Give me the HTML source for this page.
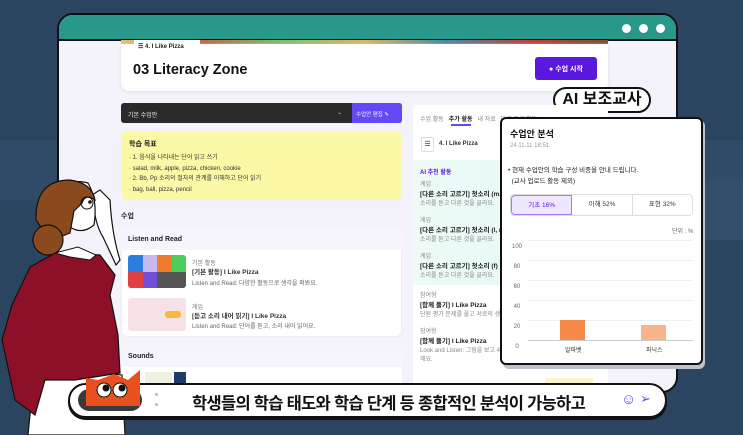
<!DOCTYPE html>
<html><head><meta charset="utf-8">
<style>
*{margin:0;padding:0;box-sizing:border-box}
body{width:743px;height:435px;overflow:hidden;background:#2b4561;font-family:"Liberation Sans","Noto Sans CJK KR",sans-serif;position:relative;color:#222}
.a{position:absolute}
.t{font-size:6px;color:#333;white-space:nowrap}
</style></head><body>
<div class="a" style="left:0;top:140px;width:743px;height:60px;background:#2f4b68"></div>
<div class="a" style="left:680px;top:180px;width:63px;height:60px;background:#344f6b"></div>
<!-- window -->
<div class="a" style="left:57px;top:13px;width:621px;height:380px;background:#f4f3fb;border:2px solid #111;border-radius:16px;overflow:hidden">
  <div class="a" style="left:0;top:0;width:100%;height:26px;background:#27988a;border-bottom:2px solid #111"></div>
  <div class="a" style="left:563px;top:9px;width:9px;height:9px;border-radius:50%;background:#fff"></div>
  <div class="a" style="left:580px;top:9px;width:9px;height:9px;border-radius:50%;background:#fff"></div>
  <div class="a" style="left:597px;top:9px;width:9px;height:9px;border-radius:50%;background:#fff"></div>
</div>
<!-- top card -->
<div class="a" style="left:121px;top:40px;width:487px;height:6px;background:linear-gradient(90deg,#e8c070,#d06040,#7cc070,#e8b060,#4a8aa0,#c04040,#8a4a30)"></div>
<div class="a" style="left:121px;top:44px;width:487px;height:47px;background:#fff;border-radius:0 0 8px 8px;box-shadow:0 1px 3px #ddd"></div>
<div class="a" style="left:134px;top:40px;width:66px;height:12px;background:#fff;border-radius:0 0 8px 8px;font-size:6px;font-weight:bold;padding:3px 4px">☰ 4. I Like Pizza</div>
<div class="a" style="left:133px;top:62px;font-size:14.5px;font-weight:bold;color:#111">03 Literacy Zone</div>
<div class="a" style="left:535px;top:57px;width:62px;height:23px;background:#5b19e0;border-radius:3px;color:#fff;font-size:7px;font-weight:bold;padding-top:7px;text-align:center">● 수업 시작</div>
<!-- AI pill -->
<div class="a" style="left:553px;top:87px;width:98px;height:26px;background:#fff;border:2px solid #111;border-radius:13px;font-size:16px;font-weight:bold;text-align:center;line-height:22px;color:#111">AI 보조교사</div>
<!-- left column -->
<div class="a" style="left:121px;top:103px;width:281px;height:20px;background:#2a2a2a;border-radius:3px"></div>
<div class="a" style="left:352px;top:103px;width:50px;height:20px;background:#6547f5;border-radius:0 3px 3px 0;color:#fff;font-size:5.5px;padding:7px 4px">수업안 편집 ✎</div>
<div class="a t" style="left:128px;top:110px;color:#eee">기본 수업안</div>
<div class="a t" style="left:337px;top:109px;color:#ccc">⌄</div>
<div class="a" style="left:121px;top:131px;width:281px;height:69px;background:#fbf8a6;border-radius:6px"></div>
<div class="a" style="left:129px;top:139px;font-size:7px;font-weight:bold">학습 목표</div>
<div class="a t" style="left:129px;top:153px;line-height:10.5px">· 1. 음식을 나타내는 단어 읽고 쓰기<br>· salad, milk, apple, pizza, chicken, cookie<br>· 2. Bb, Pp 소리의 철자의 관계를 이해하고 단어 읽기<br>· bag, ball, pizza, pencil</div>
<div class="a" style="left:121px;top:211px;font-size:7px;font-weight:bold">수업</div>
<div class="a" style="left:121px;top:228px;width:281px;height:109px;background:#fff;border-radius:6px;border:1px solid #eee"></div>
<div class="a" style="left:121px;top:228px;width:281px;height:22px;background:#f6f4fd;border-radius:6px 6px 0 0;font-size:7px;font-weight:bold;padding:8px 7px">Listen and Read</div>
<div class="a" style="left:128px;top:255px;width:58px;height:33px;display:grid;grid-template-columns:1fr 1fr 1fr 1fr;border-radius:3px;overflow:hidden">
<div style="background:#2b7de0"></div><div style="background:#c8b8f0"></div><div style="background:#f07a30"></div><div style="background:#4ccf5a"></div>
<div style="background:#e04040"></div><div style="background:#7050d8"></div><div style="background:#555;grid-column:span 2"></div></div>
<div class="a t" style="left:192px;top:258px;color:#777">기본 활동</div>
<div class="a t" style="left:192px;top:266px;font-weight:bold;font-size:6.5px">[기본 활동] I Like Pizza</div>
<div class="a t" style="left:192px;top:278px;color:#666">Listen and Read: 다양한 활동으로 생각을 펴봐요.</div>
<div class="a" style="left:128px;top:298px;width:58px;height:33px;background:#f6e2e4;border-radius:3px"></div>
<div class="a" style="left:165px;top:311px;width:16px;height:7px;background:#f4b940;border-radius:3px"></div>
<div class="a t" style="left:192px;top:302px;color:#777">게임</div>
<div class="a t" style="left:192px;top:310px;font-weight:bold;font-size:6.5px">[듣고 소리 내어 읽기] I Like Pizza</div>
<div class="a t" style="left:192px;top:321px;color:#666">Listen and Read: 단어를 듣고, 소리 내어 읽어요.</div>
<div class="a" style="left:121px;top:345px;width:281px;height:45px;background:#fff;border-radius:6px"></div>
<div class="a" style="left:121px;top:345px;width:281px;height:22px;background:#f6f4fd;border-radius:6px 6px 0 0;font-size:7px;font-weight:bold;padding:8px 7px">Sounds</div>
<div class="a" style="left:145px;top:372px;width:27px;height:14px;background:#eef0e0"></div>
<div class="a" style="left:174px;top:372px;width:12px;height:14px;background:#1f3a66"></div>
<!-- right panel -->
<div class="a" style="left:413px;top:105px;width:195px;height:285px;background:#fff;border-radius:6px"></div>
<div class="a t" style="left:420px;top:114px;color:#888">수업 활동 &nbsp; <b style="color:#222">추가 활동</b> &nbsp; 내 자료 &nbsp; 다른 자료 활동</div>
<div class="a" style="left:451px;top:124px;width:20px;height:1.5px;background:#6547f5"></div>
<div class="a" style="left:421px;top:137px;width:13px;height:15px;border:1px solid #ddd;border-radius:2px;font-size:7px;text-align:center;line-height:13px">☰</div>
<div class="a t" style="left:439px;top:141px;font-weight:bold">4. I Like Pizza</div>
<div class="a" style="left:413px;top:160px;width:195px;height:125px;background:linear-gradient(90deg,#eefaf6,#e0f8f8)"></div>
<div class="a t" style="left:420px;top:167px;color:#5b19e0;font-weight:bold">AI 추천 활동</div>
<div class="a t" style="left:420px;top:181px;line-height:9px;color:#888">게임<br><b style="color:#222;font-size:6.5px">[다른 소리 고르기] 첫소리 (m, n)</b><br>소리를 듣고 다른 것을 골라요.</div>
<div class="a t" style="left:420px;top:217px;line-height:9px;color:#888">게임<br><b style="color:#222;font-size:6.5px">[다른 소리 고르기] 첫소리 (l, n)</b><br>소리를 듣고 다른 것을 골라요.</div>
<div class="a t" style="left:420px;top:253px;line-height:9px;color:#888">게임<br><b style="color:#222;font-size:6.5px">[다른 소리 고르기] 첫소리 (f)</b><br>소리를 듣고 다른 것을 골라요.</div>
<div class="a t" style="left:420px;top:292px;line-height:9px;color:#888">참여형<br><b style="color:#222;font-size:6.5px">[함께 풀기] I Like Pizza</b><br>단원 평가 문제를 풀고 서로의 생각</div>
<div class="a t" style="left:420px;top:328px;line-height:9px;color:#888">참여형<br><b style="color:#222;font-size:6.5px">[함께 풀기] I Like Pizza</b><br>Look and Listen: 그림을 보고 4<br>해요.</div>
<div class="a" style="left:545px;top:378px;width:48px;height:12px;background:#faf3cc"></div>
<!-- analysis card -->
<div class="a" style="left:503px;top:120px;width:202px;height:249px;background:#bcc3cc;border-radius:6px"></div>
<div class="a" style="left:500px;top:117px;width:203px;height:248px;background:#fff;border:2px solid #111;border-radius:6px"></div>
<div class="a" style="left:510px;top:127px;font-size:9px;font-weight:bold;color:#111">수업안 분석</div>
<div class="a t" style="left:510px;top:143px;color:#999">24.11.11 18:51</div>
<div class="a t" style="left:508px;top:165px;font-size:6.5px;line-height:11px;color:#222">• 현재 수업안의 학습 구성 비중을 안내 드립니다.<br>&nbsp; (교사 업로드 활동 제외)</div>
<div class="a" style="left:510px;top:194px;width:183px;height:22px;border:1px solid #ddd;border-radius:4px;display:flex;font-size:6.5px;text-align:center;line-height:20px;color:#333">
<div style="flex:1;background:#efe6ff;border:1px solid #a57cf0;border-radius:4px 0 0 4px;color:#5b19e0">기초 16%</div>
<div style="flex:1;border-right:1px solid #ddd">이해 52%</div><div style="flex:1">표현 32%</div></div>
<div class="a t" style="left:672px;top:226px;color:#666">단위 : %</div>
<div class="a t" style="left:512px;top:237px;color:#666;line-height:20px">100<br>&nbsp;80<br>&nbsp;60<br>&nbsp;40<br>&nbsp;20<br>&nbsp;&nbsp;0</div>
<div class="a" style="left:528px;top:240px;width:165px;height:101px;background:repeating-linear-gradient(180deg,#eee 0 1px,transparent 1px 20px);border-bottom:1px solid #ccc"></div>
<div class="a" style="left:560px;top:320px;width:25px;height:20px;background:#f5894a"></div>
<div class="a" style="left:641px;top:325px;width:25px;height:15px;background:#f7b48a"></div>
<div class="a t" style="left:565px;top:345px">알파벳</div>
<div class="a t" style="left:646px;top:345px">파닉스</div>
<!-- woman -->
<svg class="a" style="left:0;top:175px" width="160" height="260" viewBox="0 0 160 260">
<path d="M35 190 L28 260 L125 260 L122 200 Z" fill="#fff" stroke="#111" stroke-width="1.2"/>
<path d="M55 78 L30 92 L12 130 L2 165 L15 225 L35 240 L45 205 L75 205 L120 198 L118 160 L110 120 L115 100 L100 80 Z" fill="#8c1028" stroke="#111" stroke-width="1.2"/>
<path d="M55 78 L78 72 L96 80 L90 85 L70 82 Z" fill="#fff" stroke="#111" stroke-width="1"/>
<path d="M92 20 Q95 50 103 62 L116 90 L120 85 Q112 60 110 25 L100 15 Z" fill="#fff" stroke="#111" stroke-width="1.2"/>
<path d="M63 22 Q68 2 88 8 Q98 25 94 50 Q82 60 70 52 Q60 40 63 22 Z" fill="#fff" stroke="#111" stroke-width="1.2"/>
<path d="M36 45 Q35 5 70 5 Q92 8 95 25 Q85 18 82 28 L74 36 L70 58 L60 62 L45 58 Z" fill="#8a4a1e" stroke="#111" stroke-width="1.2"/>
<circle cx="48" cy="65" r="15" fill="#8a4a1e" stroke="#111" stroke-width="1.2"/>
<circle cx="87" cy="28" r="6" fill="none" stroke="#111"/>
<circle cx="90" cy="27" r="1.8" fill="#111"/>
</svg>
<!-- bottom bar -->
<div class="a" style="left:68px;top:383px;width:599px;height:35px;background:#fff;border:2px solid #111;border-radius:18px;box-shadow:0 2px 0 #111"></div>
<div class="a" style="left:78px;top:389px;width:64px;height:22px;background:#3a3a3a;border-radius:11px"></div>
<svg class="a" style="left:84px;top:370px" width="58" height="36"><path d="M2 8 L14 10 L30 4 L44 10 L56 0 L56 36 L2 36 Z" fill="#e8501e"/><circle cx="20" cy="20" r="7" fill="#fff" stroke="#111"/><circle cx="36" cy="20" r="7" fill="#fff" stroke="#111"/><circle cx="22" cy="18" r="3.5" fill="#111"/><circle cx="38" cy="18" r="3.5" fill="#111"/></svg>
<div class="a" style="left:155px;top:393px;width:3px;height:3px;border-radius:50%;background:#b8b0f0"></div>
<div class="a" style="left:155px;top:403px;width:3px;height:3px;border-radius:50%;background:#b8b0f0"></div>
<div class="a" style="left:192px;top:390px;font-size:16.5px;font-weight:bold;color:#111;letter-spacing:-0.7px;white-space:nowrap">학생들의 학습 태도와 학습 단계 등 종합적인 분석이 가능하고</div>
<div class="a" style="left:621px;top:391px;font-size:15px;color:#6a4af0">☺</div>
<div class="a" style="left:640px;top:391px;font-size:13px;color:#6a4af0">➢</div>
</body></html>
